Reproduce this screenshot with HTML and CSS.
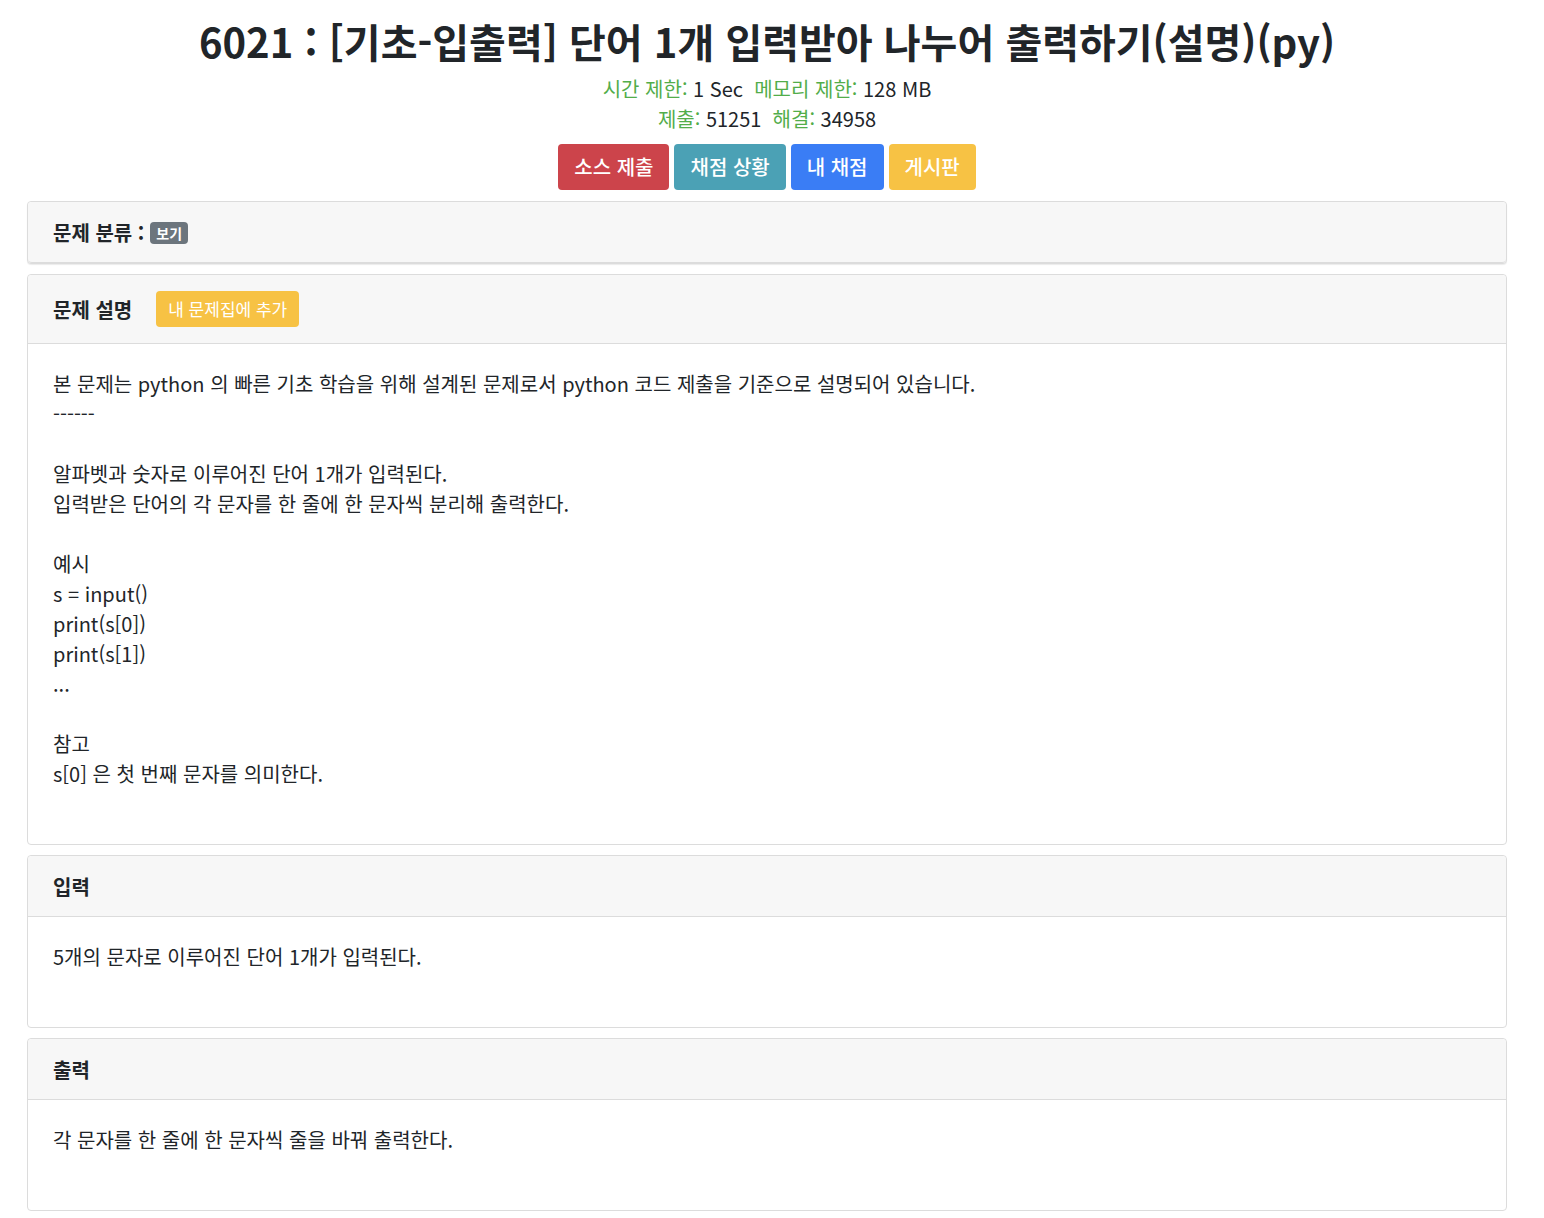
FILE: index.html
```html
<!DOCTYPE html>
<html lang="ko">
<head>
    <meta charset="utf-8">
    <meta name="viewport" content="width=device-width, initial-scale=1">
    <title>6021 : [기초-입출력] 단어 1개 입력받아 나누어 출력하기(설명)(py)</title>
    <link rel="stylesheet" href="styles.css">
</head>
<body>
    <div class="container">
        <div class="problem-head">
            <h1 class="problem-title">6021 : [기초-입출력] 단어 1개 입력받아 나누어 출력하기(설명)(py)</h1>
            <div class="meta">
                <span class="label">시간 제한:</span> 1 Sec &nbsp;<span class="label">메모리 제한:</span> 128 MB
            </div>
            <div class="meta">
                <span class="label">제출:</span> 51251 &nbsp;<span class="label">해결:</span> 34958
            </div>
            <div class="actions">
                <a class="btn btn-red" href="#">소스 제출</a>
                <a class="btn btn-teal" href="#">채점 상황</a>
                <a class="btn btn-blue" href="#">내 채점</a>
                <a class="btn btn-yellow" href="#">게시판</a>
            </div>
        </div>

        <div class="card card-only-head">
            <div class="card-header">
                문제 분류 : <span class="badge">보기</span>
            </div>
        </div>

        <div class="card">
            <div class="card-header card-header-tall">
                문제 설명 <a class="btn-small" href="#">내 문제집에 추가</a>
            </div>
            <div class="card-body">
                본 문제는 python 의 빠른 기초 학습을 위해 설계된 문제로서 python 코드 제출을 기준으로 설명되어 있습니다.<br>
                ------<br>
                <br>
                알파벳과 숫자로 이루어진 단어 1개가 입력된다.<br>
                입력받은 단어의 각 문자를 한 줄에 한 문자씩 분리해 출력한다.<br>
                <br>
                예시<br>
                s = input()<br>
                print(s[0])<br>
                print(s[1])<br>
                ...<br>
                <br>
                참고<br>
                s[0] 은 첫 번째 문자를 의미한다.
            </div>
        </div>

        <div class="card">
            <div class="card-header">입력</div>
            <div class="card-body">5개의 문자로 이루어진 단어 1개가 입력된다.</div>
        </div>

        <div class="card">
            <div class="card-header">출력</div>
            <div class="card-body">각 문자를 한 줄에 한 문자씩 줄을 바꿔 출력한다.</div>
        </div>
    </div>
</body>
</html>
```

FILE: styles.css
```css
body {
    margin: 0;
    background: #fff;
    color: #212529;
    font-family: "Noto Sans CJK KR", "Noto Sans", sans-serif;
}
.container {
    width: 1480px;
    margin-left: 27px;
}
.problem-head {
    text-align: center;
    padding-top: 12px;
}
.problem-title {
    font-size: 40px;
    font-weight: bold;
    line-height: 58px;
    margin: 0 0 4px 0;
}
.meta {
    font-size: 20px;
    line-height: 30px;
}
.label {
    color: #52ad4a;
}
.actions {
    display: flex;
    justify-content: center;
    gap: 5px;
    margin-top: 10px;
    margin-bottom: 11px;
}
.btn {
    display: inline-block;
    height: 46px;
    line-height: 46px;
    padding: 0 16px;
    border-radius: 4px;
    color: #fff;
    font-size: 20px;
    font-weight: 500;
    text-decoration: none;
}
.btn-red {
    background-color: #cc444b;
}
.btn-teal {
    background-color: #4ba1b5;
}
.btn-blue {
    background-color: #3a7df5;
}
.btn-yellow {
    background-color: #f7c244;
}
.card {
    border: 1px solid #dcdcdc;
    border-radius: 4px;
    margin-bottom: 10px;
    background: #fff;
}
.card-header {
    background-color: #f7f7f7;
    border-bottom: 1px solid #dcdcdc;
    padding: 0 25px;
    height: 60px;
    display: flex;
    align-items: center;
    font-size: 20px;
    font-weight: bold;
    border-radius: 4px 4px 0 0;
}
.card-header-tall {
    height: 68px;
}
.card-only-head .card-header {
    border-radius: 4px;
}
.card-only-head {
    box-shadow: 0 1px 1px rgba(0, 0, 0, 0.08);
}
.badge {
    display: inline-block;
    background-color: #6c757d;
    color: #fff;
    font-size: 14px;
    font-weight: bold;
    line-height: 22px;
    padding: 0 6px;
    border-radius: 4px;
    margin-left: 6px;
    margin-top: 2px;
}
.card-header .btn-small {
    display: inline-block;
    margin-left: 24px;
    background-color: #f7c244;
    color: #fff;
    font-size: 17px;
    font-weight: normal;
    line-height: 36px;
    padding: 0 12px;
    border-radius: 4px;
    text-decoration: none;
}
.card-body {
    padding: 25px 25px 55px 25px;
    font-size: 20px;
    line-height: 30px;
}
```
